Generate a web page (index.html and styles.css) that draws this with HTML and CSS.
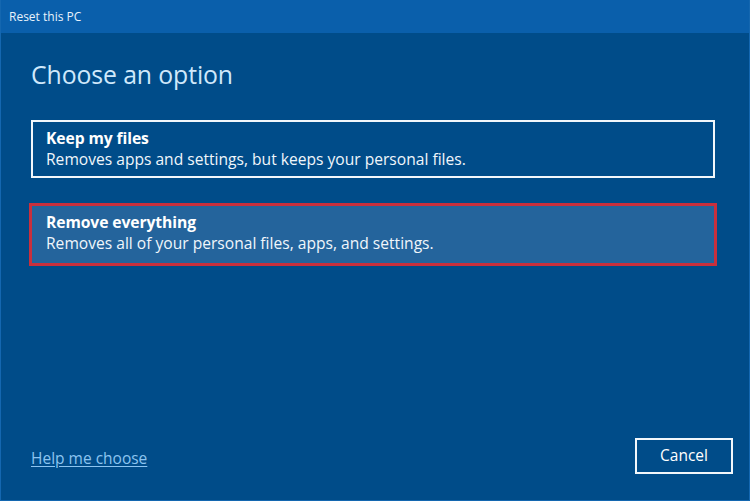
FILE: index.html
```html
<!DOCTYPE html>
<html>
<head>
<meta charset="utf-8">
<link rel="stylesheet" href="styles.css">
</head>
<body>
<div class="window">
  <div class="titlebar">Reset this PC</div>
  <div class="content">
    <h1 class="heading">Choose an option</h1>
    <div class="options">
      <div class="option">
        <div class="option-title">Keep my files</div>
        <div class="option-desc">Removes apps and settings, but keeps your personal files.</div>
      </div>
      <div class="option option-selected">
        <div class="option-title">Remove everything</div>
        <div class="option-desc">Removes all of your personal files, apps, and settings.</div>
      </div>
    </div>
    <div class="footer">
      <a class="help-link" href="#">Help me choose</a>
      <button class="cancel-btn">Cancel</button>
    </div>
  </div>
</div>
</body>
</html>
```
FILE: styles.css
```css
html, body {
  margin: 0;
  padding: 0;
  background: #004c89;
}

.window {
  width: 750px;
  height: 501px;
  box-sizing: border-box;
  border: 1px solid #1467b0;
  border-top: none;
  background: #004c89;
  display: flex;
  flex-direction: column;
  font-family: "Open Sans", "Noto Sans", sans-serif;
  color: #ffffff;
}

.titlebar {
  height: 33px;
  flex: none;
  background: #0a5fab;
  font-size: 12px;
  line-height: 34px;
  padding-left: 8px;
  color: #e8f2fb;
}

.content {
  flex: 1;
  display: flex;
  flex-direction: column;
  padding: 0 34px 0 30px;
}

.heading {
  margin: 23px 0 0 0;
  font-size: 24.8px;
  font-weight: 400;
  line-height: 36px;
  color: #cfe8fb;
  letter-spacing: -0.1px;
}

.options {
  display: flex;
  flex-direction: column;
  gap: 25px;
  margin-top: 28px;
}

.option {
  border: 2px solid #f2f7fb;
  padding: 5px 0 0 13px;
  height: 58px;
  box-sizing: border-box;
}

.option-selected {
  border: 3px solid #c9303d;
  background: #24649c;
  height: 63px;
  margin: 0 -2px;
  padding: 5px 0 0 14px;
}

.option-title {
  font-size: 15.7px;
  font-weight: 700;
  line-height: 22px;
  color: #ffffff;
  letter-spacing: -0.1px;
}

.option-desc {
  font-size: 15.6px;
  line-height: 21px;
  color: #f0f6fb;
}

.footer {
  margin-top: auto;
  margin-bottom: 26px;
  display: flex;
  justify-content: space-between;
  align-items: center;
  margin-right: -18px;
}

.help-link {
  font-size: 15.5px;
  color: #8cc4f0;
  text-decoration: underline;
  text-underline-offset: 2px;
  margin-top: 3px;
}

.cancel-btn {
  width: 98px;
  height: 36px;
  box-sizing: border-box;
  border: 2px solid #f2f7fb;
  background: transparent;
  color: #ffffff;
  font-family: "Open Sans", "Noto Sans", sans-serif;
  font-size: 15.5px;
  padding: 0 0 2px 0;
  margin-right: 0;
}
```
